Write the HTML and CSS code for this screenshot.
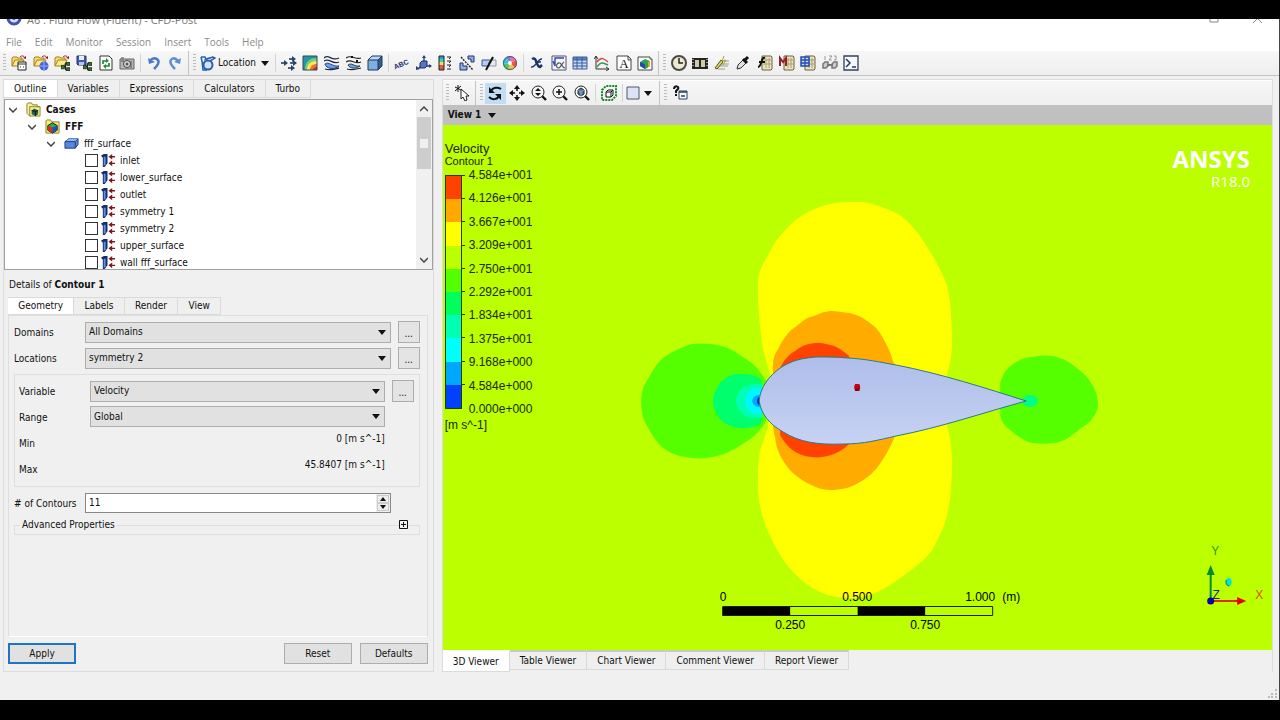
FILE: index.html
```html
<!DOCTYPE html>
<html lang="en">
<head>
<meta charset="utf-8">
<title>A6 : Fluid Flow (Fluent) - CFD-Post</title>
<link rel="stylesheet" href="styles.css">
</head>
<body>
<svg class="defs" aria-hidden="true">
  <defs>
    <symbol id="folder" viewBox="0 0 16 16"><path d="M1 11V3l1-1h4l1 1h4v2" fill="#f8dc70" stroke="#a47f1c"/><path d="M1 11 4 5h9l-3 6z" fill="#ffe98c" stroke="#a47f1c"/><path d="M9 2c2-2 4-1 5 1" fill="none" stroke="#a31616"/><path d="m12 3 3 1V1z" fill="#a31616"/></symbol>
    <symbol id="branch" viewBox="0 0 8 8"><path d="M2 4h2M4 1v6M4 1h2M4 7h2" stroke="#222" fill="none"/><path d="M0 3h3v3H0zM5 0h3v3H5zM5 5h3v3H5z" fill="#397a26" stroke="#111" stroke-width=".6"/></symbol>
    <symbol id="chev" viewBox="0 0 8 6"><path d="m0 1 4 4 4-4" fill="none" stroke="#444" stroke-width="1.5"/></symbol>
    <symbol id="surface" viewBox="0 0 16 16"><path d="M1 3 4 1h4v10l-3 4H3V5z" fill="#1a2c66"/><path d="M4 4h2v8l-2 2z" fill="#5c91ee"/><path d="M11 4h5M11 11h5" stroke="#7c1a20" stroke-width="1.4"/><path d="m9 4 4-3v6zM9 11l4-3v6z" fill="#7c1a20"/></symbol>
    <symbol id="lens" viewBox="0 0 16 16"><path d="m10 10 5 5" stroke="#111" stroke-width="2.4"/><circle cx="7" cy="7" r="6" fill="#f4f6f8" stroke="#222"/></symbol>
    <symbol id="sheet" viewBox="0 0 16 16"><path d="M5 1h9l1 1v12l-1 1H5z" fill="#ece2bc" stroke="#6d6240"/><path d="M6 5h8M6 9h8M9 3v10M12 3v10" stroke="#a89e78"/></symbol>
  </defs>
</svg>

<div class="window">
  <header class="titlebar">
    <svg class="app-icon" viewBox="0 0 16 16"><circle cx="8" cy="8" r="6" fill="#d8e1fa" stroke="#4054ad" stroke-width="3"/><circle cx="8" cy="8" r="2" fill="#5364b0"/></svg>
    <span class="title">A6 : Fluid Flow (Fluent) - CFD-Post</span>
    <svg class="caption" viewBox="0 0 60 14"><path d="M1 1h8v8H1zM44 1l9 9M53 1l-9 9" fill="none" stroke="#888"/></svg>
  </header>
  <nav class="menubar">
    <button>File</button><button>Edit</button><button>Monitor</button><button>Session</button><button>Insert</button><button>Tools</button><button>Help</button>
  </nav>

  <div class="toolbar">
    <i class="grip"></i>
    <div class="group six">
      <button aria-label="Load results"><svg viewBox="0 0 16 16"><use href="#folder"/><path d="M7 7h8v8H7z" fill="#fff" stroke="#222"/><path d="M7 9h8M9 12h1m2 0h1" stroke="#333"/></svg></button>
      <button aria-label="Load state"><svg viewBox="0 0 16 16"><use href="#folder"/><circle cx="11" cy="11" r="4.5" fill="#4665dc"/><path d="M7 11h8M11 7v8" stroke="#96aef4"/></svg></button>
      <button aria-label="Load session"><svg viewBox="0 0 16 16"><use href="#folder"/><use href="#branch" x="7" y="7" width="9" height="9"/></svg></button>
      <button aria-label="Save state"><svg viewBox="0 0 16 16"><path d="M1 1h9v9H2L1 9z" fill="#415ab0" stroke="#233775"/><path d="M3 1h5v4H3z" fill="#e9effc"/><path d="M3 7h5v3H3z" fill="#b6c7ee"/><use href="#branch" x="7" y="7" width="9" height="9"/></svg></button>
      <button aria-label="Refresh"><svg viewBox="0 0 16 16"><path d="M2 1h9l3 3v11H2z" fill="#fff" stroke="#333"/><path d="M5 9V6h4M11 8v3H7" fill="none" stroke="#23883a" stroke-width="1.7"/><path d="m8 3 3 3-3 2zM8 9l-3 2 3 3z" fill="#23883a"/></svg></button>
      <button aria-label="Save picture"><svg viewBox="0 0 16 16"><path d="M1 4h14v10H1z" fill="#b5b5b5" stroke="#666"/><path d="M2 3h3M2 6h3M12 6v7" stroke="#555"/><circle cx="8" cy="9" r="3.5" fill="#ddd" stroke="#444"/><circle cx="8" cy="9" r="1.5" fill="#555"/></svg></button>
    </div>
    <i class="sep"></i>
    <div class="group two">
      <button aria-label="Undo"><svg viewBox="0 0 16 16"><path d="M4 6c4-5 10-2 8 3-1 2-2 3-4 5" fill="none" stroke="#4979c4" stroke-width="2.5"/><path d="m2 3 1 6 6-2z" fill="#4979c4"/></svg></button>
      <button aria-label="Redo"><svg viewBox="0 0 16 16"><path d="M11 6C7 1 2 4 4 9c1 2 2 3 4 5" fill="none" stroke="#5d8fce" stroke-width="2.5"/><path d="m14 3-1 6-6-2z" fill="#5d8fce"/></svg></button>
    </div>
    <i class="edge"></i><i class="grip"></i>
    <button class="location"><svg viewBox="0 0 16 16"><path d="M1 2h4l1 2 7-2 2 1-5 3M1 2l1 4 1 9h4" fill="none" stroke="#2960ac" stroke-width="1.5"/><path d="m4 5 9-3" stroke="#2960ac"/><circle cx="8" cy="10" r="4.500" fill="#d2e2f9" stroke="#2960ac" stroke-width="2"/></svg>Location<b class="down"></b></button>
    <i class="sep"></i>
    <div class="group five">
      <button aria-label="Vector"><svg viewBox="0 0 16 16"><path d="M0 8h4M8 4h4M9 8h4M7 13h4" stroke="#1c304c" stroke-width="1.5"/><path d="m3 5 4 3-4 3zM11 1l4 3-4 3zM12 5l4 3-4 3zM10 10l4 3-4 3z" fill="#284468"/></svg></button>
      <button aria-label="Contour"><svg viewBox="0 0 16 16"><path d="M1 1h14v14H1z" fill="#2795a8"/><path d="M3 15C3 6 8 3 15 3v12z" fill="#73d078"/><path d="M5 15c0-6 4-9 10-9v9z" fill="#ffe75c"/><path d="M8 15c0-4 3-6 7-6v6z" fill="#f0702f"/><path d="M11 15c0-2 2-3 4-3v3z" fill="#d22d24"/><path d="M1 1h14v14H1z" fill="none" stroke="#314c59"/></svg></button>
      <button aria-label="Streamline"><svg viewBox="0 0 16 16"><path d="M0 3c5-5 7 4 15 0M0 6c5-4 8 4 15 1M1 14c6 2 8 0 14-1" fill="none" stroke="#202c44" stroke-width="1.3"/><path d="M1 9c4-3 7 3 14 2-4 4-13 3-14-2z" fill="#6aa1ef" stroke="#263f82"/></svg></button>
      <button aria-label="Particle track"><svg viewBox="0 0 16 16"><path d="M0 3c5-4 9 2 15 0M0 7c5-4 9 3 15 0M1 14c6 2 8 0 14-1" fill="none" stroke="#222" stroke-width="1.2"/><path d="M2 10c4-3 6 2 12 1-4 3-10 3-12-1z" fill="#6aa1ef" stroke="#244"/><path d="M5 1h2v2H5zM10 5h2v2h-2z" fill="#111"/></svg></button>
      <button aria-label="Volume rendering"><svg viewBox="0 0 16 16"><path d="m1 5 4-4h10l-4 4z" fill="#b7dafa"/><path d="M1 5h10v10H1z" fill="#7fb0e2"/><path d="m11 5 4-4v10l-4 4z" fill="#315f91"/><path d="m1 5 4-4h10v10l-4 4H1zM1 5h10v10M11 5l4-4" fill="none" stroke="#203759"/></svg></button>
    </div>
    <i class="sep"></i>
    <div class="group six">
      <button aria-label="Text"><svg viewBox="0 0 16 16"><text class="abc" x="0" y="13" transform="rotate(-23 4 11)">ABC</text></svg></button>
      <button aria-label="Coordinate frame"><svg viewBox="0 0 16 16"><path d="M8 8V1M8 11h7M5 11l-3 3" stroke="#283f7b" stroke-width="1.3"/><path d="m6 3 2-3 2 3zM13 9l3 2-3 2zM0 15v-4l4 3z" fill="#283f7b"/><path d="m4 8 2-2h5v5l-2 2H4z" fill="#5276c5" stroke="#1d2d5f"/></svg></button>
      <button aria-label="Legend"><svg viewBox="0 0 16 16"><path d="M2 1h5v3H2z" fill="#3498d5"/><path d="M2 4h5v3H2z" fill="#43d3a0"/><path d="M2 7h5v3H2z" fill="#e9e06a"/><path d="M2 10h5v5H2z" fill="#df5a44"/><path d="M2 1h5v14H2z" fill="none" stroke="#222"/><path d="M10 2h4l-2 2M10 6h4l-2 2M10 10h4l-2 2M10 14h4" fill="none" stroke="#222"/></svg></button>
      <button aria-label="Instance transform"><svg viewBox="0 0 16 16"><path d="M9 1h6v6h-3V4H9zM1 8h3v3h4v4H1z" fill="#8fb0ea" stroke="#1f3669"/><path d="m2 2 12 13" stroke="#222" stroke-width="1.4" stroke-dasharray="2 1"/></svg></button>
      <button aria-label="Clip plane"><svg viewBox="0 0 16 16"><path d="M1 5h8l-2 6H1z" fill="#b4cdf4" stroke="#39568f"/><path d="M9 5h6v6H7z" fill="#e5e9f0" stroke="#8d98aa"/><path d="M12 2 5 15" stroke="#111" stroke-width="2"/></svg></button>
      <button aria-label="Color map"><svg viewBox="0 0 16 16"><path d="M8 8V1a7 7 0 0 1 6 4z" fill="#f06ab0"/><path d="m8 8 6-3a7 7 0 0 1-1 8z" fill="#f15545"/><path d="m8 8 5 5a7 7 0 0 1-7 2z" fill="#ebcc3a"/><path d="m8 8-2 7a7 7 0 0 1-5-6z" fill="#55c36b"/><path d="M8 8 1 9a7 7 0 0 1 3-7z" fill="#33c4dc"/><path d="M8 8 4 2a7 7 0 0 1 4-1z" fill="#777be0"/><circle cx="8" cy="8" r="2" fill="#fff"/><circle cx="8" cy="8" r="6.500" fill="none" stroke="#4a5c70"/></svg></button>
    </div>
    <i class="sep"></i>
    <div class="group six">
      <button aria-label="Variables"><svg viewBox="0 0 16 16"><path d="M3 4c5-3 4 8 8 8l2-2" fill="none" stroke="#183568" stroke-width="2.500"/><path d="M13 4c-4-1-6 9-11 8M6 7h6" fill="none" stroke="#183568" stroke-width="1.500"/></svg></button>
      <button aria-label="Expressions"><svg viewBox="0 0 16 16"><path d="M1 1h14v14H1z" fill="#f4f5ff" stroke="#4d5570"/><path d="m2 6 2 5V3h9" fill="none" stroke="#3445b4" stroke-width="1.400"/><path d="M13 7c-2 1-3 6-6 6-3-1-1-6 2-5 2 1 2 5 5 5" fill="none" stroke="#555" stroke-width="1.200"/></svg></button>
      <button aria-label="Table"><svg viewBox="0 0 16 16"><path d="M1 2h14v12H1z" fill="#c9dcf7"/><path d="M1 2h14v3H1z" fill="#5e87bf"/><path d="M1 2h14v12H1zM1 5h14M1 8h14M1 11h14M5 2v12M10 2v12" fill="none" stroke="#385d9c"/></svg></button>
      <button aria-label="Chart"><svg viewBox="0 0 16 16"><path d="M2 1v13h13M0 4l2-3 2 3M12 12l3 2-3 2" fill="none" stroke="#333"/><path d="M3 7c4-5 6-4 11 0" fill="none" stroke="#d04545" stroke-width="1.500"/><path d="M3 12c4-6 6-4 11-2" fill="none" stroke="#35985a" stroke-width="1.500"/></svg></button>
      <button aria-label="Comment"><svg viewBox="0 0 16 16"><path d="M1 1h11l3 3v11H1zM12 1v4h3" fill="#fff" stroke="#444"/><text class="letter" x="8" y="13">A</text></svg></button>
      <button aria-label="Figure"><svg viewBox="0 0 16 16"><path d="M1 2h12v2h2v11H1z" fill="#fff" stroke="#444"/><path d="m3 7 5-3 5 2v5l-5 3-5-3z" fill="#25a858"/><path d="m3 7 5 2v5l-5-3z" fill="#214cb0"/><path d="m8 9 5-3v5l-5 3z" fill="#36a03c"/><path d="m11 7 2-1v5l-2 1z" fill="#e7a22c"/></svg></button>
    </div>
    <i class="edge"></i><i class="grip"></i>
    <div class="group nine">
      <button aria-label="Timestep selector"><svg viewBox="0 0 16 16"><circle cx="8" cy="8" r="7" fill="#eee9cf" stroke="#4c4a43" stroke-width="2"/><path d="M8 3v5h4" fill="none" stroke="#222" stroke-width="1.500"/></svg></button>
      <button aria-label="Animation"><svg viewBox="0 0 16 16"><path d="M0 3h16v11H0z" fill="#242424"/><path d="M3 5h4v7H3zM9 5h4v7H9z" fill="#cfcba5"/><path d="M1 4v9M15 4v9" stroke="#fff" stroke-dasharray="1 2"/></svg></button>
      <button aria-label="Quick editor"><svg viewBox="0 0 16 16"><path d="M5 9h10M4 11h10M4 14h7M9 6h6" stroke="#999"/><path d="m1 13 6-8 2 2-6 7z" fill="#dad45b" stroke="#55511d"/><path d="m10 1-2 5 4-1-3 5" fill="none" stroke="#b1a620"/></svg></button>
      <button aria-label="Probe"><svg viewBox="0 0 16 16"><path d="m2 14 1-4 6-6 3 3-6 6z" fill="#dce2e8" stroke="#333"/><path d="m8 4 4 4M10 5l3-3" stroke="#111" stroke-width="3"/></svg></button>
      <button aria-label="Function calculator"><svg viewBox="0 0 16 16"><use href="#sheet"/><path d="M8 3C4 1 5 12 1 12M2 7h6" fill="none" stroke="#111" stroke-width="2"/></svg></button>
      <button aria-label="Macro calculator"><svg viewBox="0 0 16 16"><use href="#sheet"/><path d="M1 11V3l3 4 3-4v8" fill="none" stroke="#92232c" stroke-width="2"/></svg></button>
      <button aria-label="Mesh calculator"><svg viewBox="0 0 16 16"><use href="#sheet"/><path d="M1 2h8v9H1z" fill="#c6dafd" stroke="#234caa" stroke-width="1.500"/><path d="M1 5h8M1 8h8M5 2v9" stroke="#234caa" stroke-width="1.300"/></svg></button>
      <button aria-label="Case comparison"><svg viewBox="0 0 16 16"><path d="M3 1v4M7 1h3l-3 4h3M12 1h2v4h-2" fill="none" stroke="#999"/><path d="m1 9 2-2h3v4l-2 2H1zM10 9l2-2h3v4l-2 2h-3z" fill="#ccc" stroke="#777" stroke-width="1.500"/><path d="M5 10h6" stroke="#777" stroke-width="2"/></svg></button>
      <button aria-label="Command editor"><svg viewBox="0 0 16 16"><path d="M1 1h14v14H1z" fill="#f7f8fb" stroke="#30415d" stroke-width="1.300"/><path d="m3 4 4 4-4 4M9 12h4" fill="none" stroke="#263a5a" stroke-width="1.500"/></svg></button>
    </div>
  </div>

  <main class="workspace">
    <aside class="side">
      <div class="tabs outline-tabs" role="tablist">
        <button role="tab" aria-selected="true">Outline</button><button role="tab">Variables</button><button role="tab">Expressions</button><button role="tab">Calculators</button><button role="tab">Turbo</button>
      </div>
      <div class="tree-box">
        <ul class="tree">
          <li><div class="row strong"><svg class="chev"><use href="#chev"/></svg><svg class="node" viewBox="0 0 16 16"><path d="M1 12V2l1-1h4l1 2h5v2h3v10H4z" fill="#f6ef9b" stroke="#8b8222"/><path d="M4 15V5h11" fill="none" stroke="#8b8222"/><path d="m6 9 3-2 4 2v4l-3 2-4-2z" fill="#276244"/><path d="m6 9 4 1 3-1M10 10v5" stroke="#111" fill="none"/></svg>Cases</div>
          <ul>
            <li><div class="row strong"><svg class="chev"><use href="#chev"/></svg><svg class="node" viewBox="0 0 16 16"><path d="M1 15V2l1-1h4l1 2h8v12z" fill="#f6ef75" stroke="#8b8222"/><path d="m3 7 5-3 5 3v5l-5 3-5-3z" fill="#2eab55" stroke="#111"/><path d="m3 7 5 2v6l-5-3z" fill="#cc3328"/><path d="m8 9 5-2v5l-5 3z" fill="#204fb7"/></svg>FFF</div>
            <ul>
              <li><div class="row"><svg class="chev"><use href="#chev"/></svg><svg class="node" viewBox="0 0 16 16"><path d="m1 6 4-3h10v6l-3 4H1z" fill="#5688df" stroke="#203b7b"/><path d="m1 6 4-3h10l-3 3z" fill="#8cb8f6"/><path d="M1 6h11v7M12 6l3-3" fill="none" stroke="#203b7b"/></svg>fff_surface</div>
              <ul class="leaves">
                <li><label class="row"><input type="checkbox"><svg class="node"><use href="#surface"/></svg>inlet</label></li>
                <li><label class="row"><input type="checkbox"><svg class="node"><use href="#surface"/></svg>lower_surface</label></li>
                <li><label class="row"><input type="checkbox"><svg class="node"><use href="#surface"/></svg>outlet</label></li>
                <li><label class="row"><input type="checkbox"><svg class="node"><use href="#surface"/></svg>symmetry 1</label></li>
                <li><label class="row"><input type="checkbox"><svg class="node"><use href="#surface"/></svg>symmetry 2</label></li>
                <li><label class="row"><input type="checkbox"><svg class="node"><use href="#surface"/></svg>upper_surface</label></li>
                <li><label class="row"><input type="checkbox"><svg class="node"><use href="#surface"/></svg>wall fff_surface</label></li>
              </ul></li>
            </ul></li>
          </ul></li>
        </ul>
        <div class="scrollbar"><svg class="chev up"><use href="#chev"/></svg><div class="thumb"></div><svg class="chev"><use href="#chev"/></svg></div>
      </div>

      <section class="details">
        <div class="heading">Details of <b>Contour 1</b></div>
        <div class="tabs detail-tabs" role="tablist">
          <button role="tab" aria-selected="true">Geometry</button><button role="tab">Labels</button><button role="tab">Render</button><button role="tab">View</button>
        </div>
        <form class="panel">
          <div class="field"><label for="domains">Domains</label><span class="combo"><select id="domains"><option>All Domains</option></select></span><button type="button" class="more" aria-label="Choose domains">...</button></div>
          <div class="field"><label for="locations">Locations</label><span class="combo"><select id="locations"><option>symmetry 2</option></select></span><button type="button" class="more" aria-label="Choose locations">...</button></div>
          <div class="box">
            <div class="field"><label for="variable">Variable</label><span class="combo"><select id="variable"><option>Velocity</option></select></span><button type="button" class="more" aria-label="Choose variable">...</button></div>
            <div class="field"><label for="range">Range</label><span class="combo"><select id="range"><option>Global</option></select></span></div>
            <div class="field"><span>Min</span><output>0 [m s^-1]</output></div>
            <div class="field"><span>Max</span><output>45.8407 [m s^-1]</output></div>
          </div>
          <div class="field"><label for="contours"># of Contours</label><span class="spin"><input id="contours" type="text" value="11"><span class="steps"><button type="button" aria-label="Increase"><i class="tri-up"></i></button><button type="button" aria-label="Decrease"><i class="tri-down"></i></button></span></span></div>
          <fieldset class="advanced"><legend>Advanced Properties</legend><button type="button" class="plus" aria-label="Expand"><svg viewBox="0 0 9 9"><path d="M.5.5h8v8h-8zM2 4.500h5M4.500 2v5" fill="none" stroke="#111"/></svg></button></fieldset>
        </form>
        <div class="actions"><button class="apply">Apply</button><button>Reset</button><button>Defaults</button></div>
      </section>
    </aside>

    <section class="viewer">
      <div class="toolbar view-tools">
        <i class="grip"></i>
        <div class="group one"><button aria-label="Select"><svg viewBox="0 0 16 16"><path d="M4 0v7M1 2l6 3M7 1 1 6" stroke="#111"/><path d="M7 4v10l2-2 2 4 2-1-1-4h3z" fill="#fff" stroke="#222"/></svg></button></div>
        <i class="edge"></i><i class="grip"></i>
        <div class="group five">
          <button class="on" aria-label="Rotate"><svg viewBox="0 0 16 16"><path d="M4 6c2-4 7-4 10-2M12 11c-2 4-7 4-10 1" fill="none" stroke="#111" stroke-width="2"/><path d="M2 2v6h6zM14 15V9H8z" fill="#111"/></svg></button>
          <button aria-label="Pan"><svg viewBox="0 0 16 16"><path d="M8 2v4M8 10v4M2 8h4M10 8h4" stroke="#111" stroke-width="1.500"/><path d="m8 0 3 4H5zM8 16l3-4H5zM0 8l4-3v6zM16 8l-4-3v6z" fill="#111"/></svg></button>
          <button aria-label="Zoom"><svg viewBox="0 0 16 16"><use href="#lens"/><path d="m7 3 3 3H4zM7 11l3-3H4z" fill="#111"/></svg></button>
          <button aria-label="Zoom box"><svg viewBox="0 0 16 16"><use href="#lens"/><path d="M7 4v6M4 7h6" stroke="#111" stroke-width="1.500"/></svg></button>
          <button aria-label="Fit view"><svg viewBox="0 0 16 16"><use href="#lens"/><path d="m4 5 3-2 3 2v4l-3 2-3-2z" fill="#52719f" stroke="#233"/><path d="m4 5 3 2 3-2M7 7v4" fill="none" stroke="#dce6f5" stroke-width=".5"/></svg></button>
        </div>
        <i class="sep"></i>
        <div class="group one"><button aria-label="Highlight"><svg viewBox="0 0 16 16"><path d="m1 5 4-4h10v10l-4 4H1z" fill="none" stroke="#108b22" stroke-width="2" stroke-dasharray="2 1"/><path d="m5 7 2-2h5v5l-2 2H5zM5 7h5v5M10 7l2-2" fill="#fff" stroke="#111"/></svg></button></div>
        <i class="sep"></i>
        <button class="layout" aria-label="Viewport layout"><svg viewBox="0 0 16 16"><path d="M2 2h12v12H2z" fill="#dce3f5" stroke="#4f566a"/></svg><b class="down"></b></button>
        <i class="edge"></i><i class="grip"></i>
        <div class="group one"><button aria-label="Help"><svg viewBox="0 0 16 16"><path d="M2 4c0-4 6-3 4 0L4 6v2M4 9v2" fill="none" stroke="#111" stroke-width="2"/><path d="M7 6h8v8H7z" fill="#fff" stroke="#263d5d"/><path d="M7 7h8M9 11h4" stroke="#263d5d" stroke-width="1.500"/></svg></button></div>
      </div>
      <button class="view-name">View 1<b class="down"></b></button>

      <div class="canvas">
        <svg class="scene" viewBox="443 125 829 525" role="img" aria-label="Velocity contours around an airfoil">
          <defs><linearGradient id="foil" x2="0" y2="1"><stop stop-color="#aebeea"/><stop offset="1" stop-color="#c7d2f3"/></linearGradient></defs>
          <path fill="#ff0" d="M770 375 763 350C760 330 757 306 758 280 760 267 763 264 768 255 775 240 780 236 787 228 797 218 804 213 817 208 828 203 839 202 852 202 862 202 869 202 878 206 891 210 898 213 907 221 921 235 927 247 935 260 942 274 946 281 948 290 951 305 951 320 952 337 952 355 950 365 947 373V426C950 437 952 450 952 467 951 484 951 497 948 510 945 526 940 534 935 545 929 556 921 562 911 570 896 581 883 591 867 596 853 600 836 598 825 594 812 589 804 583 796 575 786 566 778 553 771 538 765 526 762 517 759 502 757 486 757 466 760 450L768 427z"/>
          <path fill="#5f0" d="M641 401c0-9 3-17 8-24 3-6 8-14 14-19 7-5 13-8 20-11 8-4 16-4 24-3 8 0 16 2 23 5 6 3 12 8 19 12 7 5 12 12 17 20v40c-5 9-13 17-22 22-9 6-18 11-27 13-12 3-21 3-32 1-8-1-15-4-22-9-7-6-11-13-16-22-5-8-6-16-6-25z"/>
          <path fill="#00ff6c" d="M713 401c0-7 3-13 7-18 7-7 14-10 22-9 8 0 15 2 19 6v44c-8 3-18 6-27 3-14-3-21-15-21-26z"/>
          <path fill="#00ffb4" d="M736 401c0-10 9-17 19-17h7v34h-8c-10 0-18-7-18-17z"/>
          <ellipse cx="757" cy="401" rx="12" ry="13" fill="#00f7ff"/>
          <ellipse cx="759" cy="401" rx="7" ry="6" fill="#00a5ff"/><ellipse cx="760" cy="401" rx="3" ry="4" fill="#022c90"/>
          <path fill="#ffab00" d="M773 374c-1-13 1-20 5-25 3-7 7-13 13-19 8-5 12-11 19-13 8-2 13-6 22-6 8 1 13 1 21 3 10 3 16 8 23 14 6 7 9 14 13 22 2 5 3 9 5 14v74c-4 9-8 17-13 24-5 8-13 16-23 21-8 5-18 7-28 7-8 0-15-3-21-6-8-4-16-10-21-16-7-9-12-19-13-30-2-8-3-15-2-21z"/>
          <path fill="#ff4200" d="M780 368c3-7 8-13 15-17 7-6 15-8 23-8 7 0 10 2 16 3 5 2 10 6 15 10v88c-6 6-12 9-18 11-7 2-13 3-20 2-14-1-25-10-31-22z"/>
          <path fill="#5f0" d="M1000 383c2-8 6-14 12-18 6-5 13-8 21-8 9-2 18-2 26 1 8 2 14 7 20 12 6 4 11 11 15 18 3 7 5 15 3 22-4 9-9 14-16 18-10 8-17 14-28 15-9 1-17 1-25-1-8-4-14-8-19-13-6-4-9-10-9-16z"/>
          <ellipse cx="1030" cy="401" rx="8" ry="6" fill="#00ff84"/>
          <path fill="url(#foil)" stroke="#2a7a90" d="M759 401c1-14 10-25 21-33 10-7 22-10 36-11 12 0 21 0 32 1 18 1 31 4 48 7 46 9 89 23 130 36-44 12-84 26-130 35-18 4-32 8-53 8-26 1-44-2-60-12-14-8-22-18-24-31z"/>
          <path d="M855 384h4q2 3 0 7h-4q-2-4 0-7z" fill="#c80014"/><path d="M855 388h4v3h-4z" fill="#8c0010"/>
          <path fill="#000" d="M722.500 607h67.500v9h-67.500zM857.500 607h67.500v9h-67.500z"/><path d="M722.500 606.500h270v9h-270z" fill="none" stroke="#182000"/>
          <g class="measure"><text x="723" y="601">0</text><text x="857" y="601">0.500</text><text x="980" y="601">1.000</text><text x="1011" y="601">(m)</text><text x="790" y="629">0.250</text><text x="925" y="629">0.750</text></g>
          <path d="M1210.500 601v-30" stroke="#008b35" stroke-width="2"/><path d="m1210.500 565 4 10h-8z" fill="#008b35"/><path d="M1211 601h31" stroke="#e12a00" stroke-width="2"/><path d="m1246 601-9-4v8z" fill="#e90000"/><circle cx="1210.500" cy="601" r="3.500" fill="#0000a5"/><ellipse cx="1228.500" cy="582" rx="3" ry="4" fill="#00e8d2"/><path d="M1226 580q-1 5 3 6" stroke="#087b77" fill="none"/>
          <g class="measure"><text x="1215" y="555" fill="#2b9e00">Y</text><text x="1216" y="599" fill="#112c6b">Z</text><text x="1259" y="599" fill="#e05000">X</text></g>
        </svg>
        <div class="legend">
          <div class="quantity">Velocity</div><div class="contour-name">Contour 1</div>
          <div class="scale"><div class="colors"><i class="c1"></i><i class="c2"></i><i class="c3"></i><i class="c4"></i><i class="c5"></i><i class="c6"></i><i class="c7"></i><i class="c8"></i><i class="c9"></i><i class="c10"></i></div>
          <ol><li>4.584e+001</li><li>4.126e+001</li><li>3.667e+001</li><li>3.209e+001</li><li>2.750e+001</li><li>2.292e+001</li><li>1.834e+001</li><li>1.375e+001</li><li>9.168e+000</li><li>4.584e+000</li><li>0.000e+000</li></ol></div>
          <div>[m s^-1]</div>
        </div>
        <div class="brand"><b>ANSYS</b><span>R18.0</span></div>
      </div>
      <div class="tabs viewer-tabs" role="tablist"><button role="tab" aria-selected="true">3D Viewer</button><button role="tab">Table Viewer</button><button role="tab">Chart Viewer</button><button role="tab">Comment Viewer</button><button role="tab">Report Viewer</button></div>
    </section>
  </main>
  <footer class="status"><svg viewBox="0 0 9 9"><path d="M7 0h2v2H7zM7 4h2v2H7zM3 4h2v2H3zM7 7h2v2H7zM3 7h2v2H3zM0 7h2v2H0z" fill="#bbb"/></svg></footer>
</div>
</body>
</html>
```
FILE: styles.css
```css
* { box-sizing: border-box; }
body { margin: 0; height: 100vh; padding: 19px 0 20px; background: #000; color: #111; font: 10px/14px "DejaVu Sans Condensed", "Open Sans", sans-serif; }
button, input, select { font: inherit; color: inherit; margin: 0; padding: 0; border: 0; background: none; border-radius: 0; }
ul, ol { margin: 0; padding: 0; list-style: none; }
i { font-style: normal; }
svg { display: block; flex: none; }
.defs { position: absolute; width: 0; height: 0; }
.window { height: 100%; min-height: 600px; display: flex; flex-direction: column; background: #f0f0f0; border-right: 1px solid #444; overflow: hidden; }

.titlebar { display: flex; height: 14px; align-items: flex-start; background: #fff; overflow: hidden; padding: 0 10px 0 6px; gap: 5px; }
.app-icon { width: 16px; height: 16px; margin-top: -9px; }
.title { font: 11px/14px "Open Sans", sans-serif; color: #777; margin-top: -6px; flex: 1; }
.caption { width: 60px; height: 14px; margin-top: -6px; }
.menubar { display: flex; gap: 13px; height: 18px; flex: none; background: #fff; padding: 0 6px; font: 10px/18px "Open Sans", sans-serif; color: #8b8b8b; }

.toolbar { display: flex; align-items: center; flex: none; height: 25px; padding-left: 1px; border-bottom: 1px solid #c4c4c4; background: linear-gradient(#f7f7f7, #eee); }
.group { display: flex; flex: none; }
.group button { flex: 1; height: 21px; display: grid; place-items: center; }
.toolbar svg { width: 16px; height: 16px; }
.six { width: 130px; } .two { width: 43px; } .five { width: 108px; } .nine { width: 194px; } .one { width: 22px; }
.grip { width: 3px; height: 18px; margin: 0 2px; flex: none; background: repeating-linear-gradient(#bbb 0 1px, transparent 1px 3px); }
.sep { width: 1px; height: 18px; margin: 0 2px; background: #d4d4d4; flex: none; }
.edge { width: 1px; height: 24px; margin: 0 2px; background: #c4c4c4; flex: none; }
.location { display: flex; align-items: center; gap: 2px; width: 75px; height: 21px; padding-left: 2px; flex: none; }
.down { display: inline-block; border: 4px solid transparent; border-top: 5px solid #111; border-bottom: 0; margin-left: 3px; }
.abc { font: bold 7px "Liberation Sans", sans-serif; fill: #182c75; }
.letter { font: 13px "Liberation Serif", serif; text-anchor: middle; fill: #111; }

.workspace { flex: 1; min-height: 0; display: grid; grid-template-columns: minmax(0, 43fr) minmax(0, 83fr); gap: 8px; padding: 3px 6px 0 3px; }
.side { display: flex; flex-direction: column; border: 1px solid #dcdcdc; min-width: 0; min-height: 0; }
.tabs { display: flex; flex: none; }
.tabs button { height: 18px; padding: 0 8px; border: 1px solid #dadada; border-left: 0; background: #efefef; white-space: nowrap; }
.tabs button[aria-selected] { background: #fff; }
.outline-tabs { margin: -1px 0 1px; height: 19px; }
.outline-tabs button { height: 19px; padding: 0 10px; }
.tree-box { display: flex; height: 171px; flex: none; border: 1px solid #a0a0a0; background: #fff; overflow: hidden; }
.tree { flex: 1; padding-top: 1px; }
.tree ul { padding-left: 19px; }
.tree .leaves { padding-left: 23px; }
.row { display: flex; align-items: center; height: 17px; gap: 5px; padding-left: 4px; white-space: nowrap; }
.strong { font-weight: bold; }
.chev { width: 8px; height: 6px; margin-right: 4px; }
.node { width: 15px; height: 15px; }
.leaves .row { gap: 2px; padding-left: 19px; }
.leaves .node { margin-right: 3px; }
.row input { appearance: none; width: 13px; height: 13px; border: 1px solid #333; background: #fff; }
.scrollbar { width: 16px; background: #f0f0f0; display: flex; flex-direction: column; align-items: center; padding: 6px 1px; }
.scrollbar .chev { margin: 0; }
.up { transform: rotate(180deg); }
.thumb { width: 14px; height: 52px; margin: 5px 0 auto; background: #cdcdcd; display: grid; place-items: center; }
.thumb::after { content: ""; width: 8px; height: 9px; background: #f0f0f0; }

.details { flex: 1; min-height: 0; display: flex; flex-direction: column; padding: 8px 5px 7px 4px; }
.heading { padding-left: 1px; }
.detail-tabs { margin-top: 5px; width: 213px; }
.detail-tabs button { padding: 0 10px; flex: 1 0 auto; }
.panel { flex: 1; border: 1px solid #dedede; border-bottom-color: #fff; padding: 5px 7px 5px 5px; display: flex; flex-direction: column; gap: 5px; }
.field { display: grid; grid-template-columns: 64px 1fr 22px; column-gap: 7px; align-items: center; height: 21px; }
.combo { position: relative; display: flex; height: 21px; }
.combo::after { content: ""; position: absolute; right: 5px; top: 8px; border: 4px solid transparent; border-top: 5px solid #111; border-bottom: 0; pointer-events: none; }
select { appearance: none; width: 100%; border: 1px solid #adadad; background: #e1e1e1; padding-left: 3px; }
.more { height: 22px; border: 1px solid #adadad; background: #e4e4e4; padding-top: 3px; line-height: 14px; }
.box { border: 1px solid #dedede; padding: 5px 5px 7px 4px; display: flex; flex-direction: column; gap: 5px; margin-top: 1px; }
.field > label, .field > span:first-child { padding-top: 2px; white-space: nowrap; }
output { text-align: right; padding-bottom: 7px; }
.spin { display: flex; height: 20px; border: 1px solid #888; background: #fff; }
.spin input { flex: 1; min-width: 0; padding-left: 3px; }
.steps { display: grid; width: 14px; padding: 1px; background: #eee; }
.steps button { display: grid; place-items: center; border: 1px solid #ccc; }
.tri-up, .tri-down { border: 3px solid transparent; border-bottom: 4px solid #111; border-top: 0; }
.tri-down { border-bottom: 0; border-top: 4px solid #111; }
.advanced { position: relative; margin: 0; min-width: 0; height: 17px; padding: 0; border: 1px solid #dedede; }
.advanced legend { margin-left: 5px; padding: 0 2px; }
.plus { position: absolute; right: 11px; top: -12px; background: #f0f0f0; width: 9px; height: 9px; }
.actions { display: flex; gap: 8px; margin-top: 6px; }
.actions button { width: 68px; height: 21px; border: 1px solid #adadad; background: #e1e1e1; }
.actions .apply { border: 2px solid #1e75c5; margin-right: auto; }

.viewer { min-width: 0; min-height: 0; display: flex; flex-direction: column; border: 1px solid #dcdcdc; border-bottom: 0; }
.view-tools { border-bottom: 0; border-top: 1px solid #fff; }
.on { background: #c1ddf5; }
.layout { display: flex; align-items: center; width: 32px; height: 21px; }
.layout .down { margin-left: 3px; }
.view-name { display: flex; align-items: center; gap: 4px; flex: none; height: 20px; padding-left: 5px; background: #c0c0c0; font-weight: bold; }
.canvas { position: relative; flex: 1; min-height: 0; background: #bf0; font: 12px/14px "Liberation Sans", sans-serif; color: #202800; }
.scene { position: absolute; width: 100%; height: 100%; }
.measure { font: 12px "Liberation Sans", sans-serif; text-anchor: middle; }
.legend { position: absolute; left: 2px; top: 17px; }
.quantity { font-size: 13px; line-height: 13px; }
.contour-name { font-size: 11px; line-height: 12px; }
.scale { display: flex; margin: 1px 0 2px; }
.colors { width: 17px; height: 234px; border: 1px solid #283b00; display: grid; margin-top: 7px; }
.colors i { position: relative; }
.colors i::after { content: ""; position: absolute; left: 100%; top: -1px; width: 4px; height: 1px; background: #283b00; }
.c1 { background: #ff4200; } .c2 { background: #ffa900; } .c3 { background: #ff0; } .c4 { background: #bf0; } .c5 { background: #5f0; }
.c6 { background: #00ff5c; } .c7 { background: #00ffb5; } .c8 { background: #0ff; } .c9 { background: #00a7ff; } .c10 { background: #0040ff; }
.legend ol { height: 248px; margin-left: 7px; display: flex; flex-direction: column; justify-content: space-between; }
.brand { position: absolute; top: 19px; right: 22px; display: grid; justify-items: end; color: #fff; font-family: "Open Sans", sans-serif; }
.brand b { font-size: 24px; line-height: 30px; }
.brand span { font-size: 15px; line-height: 15px; }
.viewer-tabs button { height: 20px; padding: 0 10px; border-top: 2px solid #c8c8c8; }
.viewer-tabs button[aria-selected] { height: 22px; border-top-color: #fff; }
.status { height: 28px; flex: none; display: flex; justify-content: flex-end; align-items: flex-end; padding: 2px; }
.status svg { width: 9px; height: 9px; }
```
